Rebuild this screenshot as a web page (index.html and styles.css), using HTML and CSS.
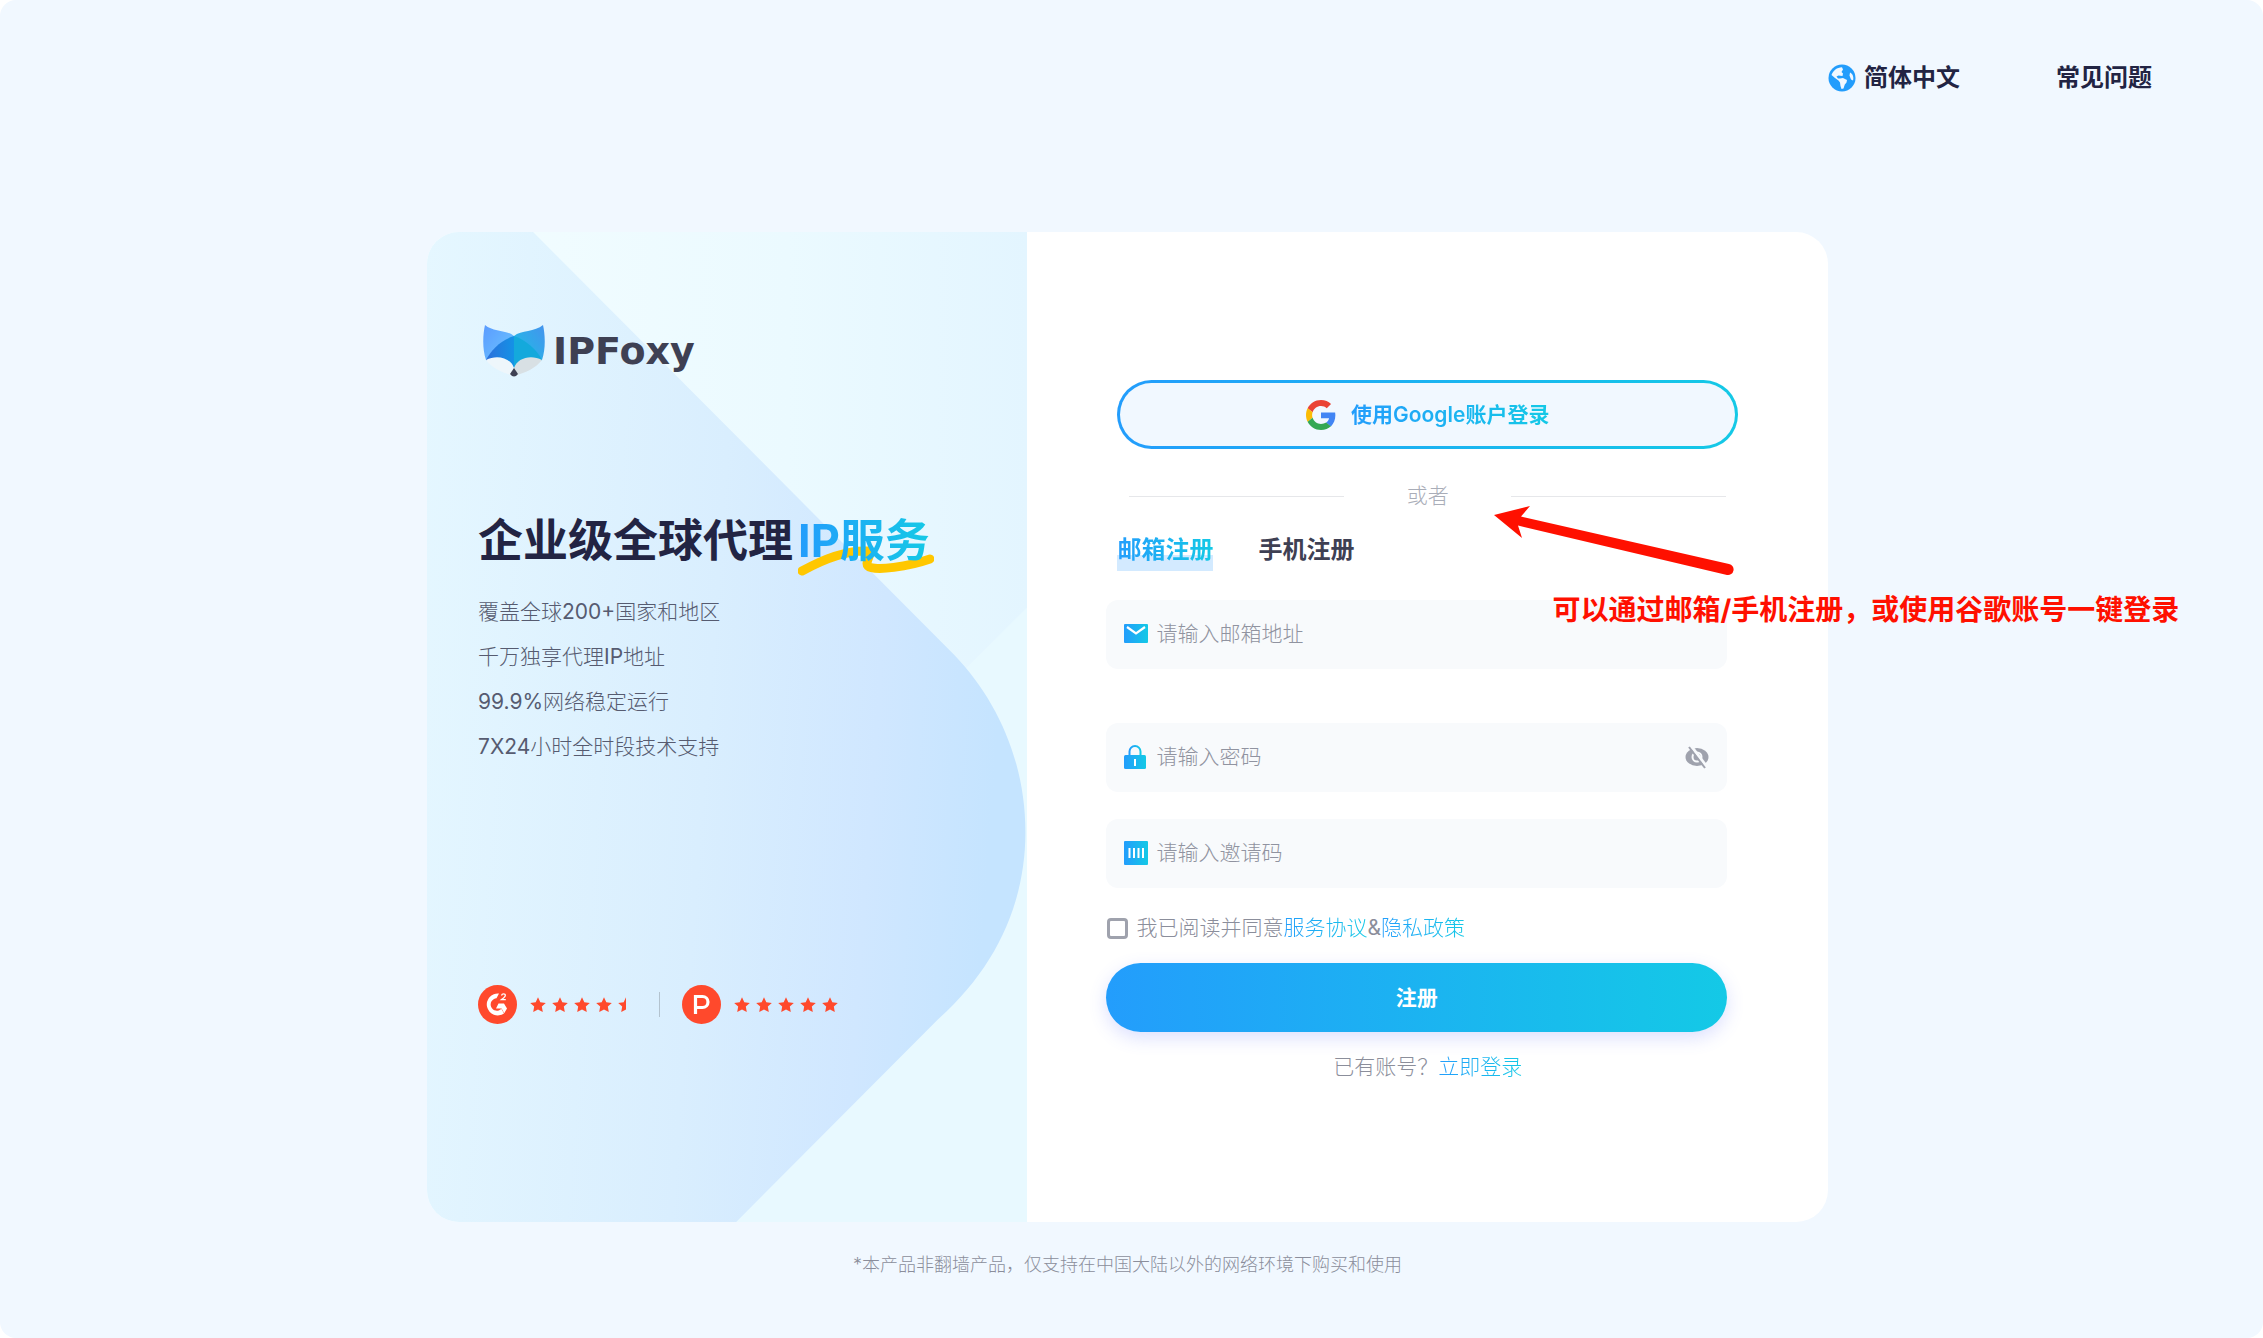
FILE: index.html
```html
<!DOCTYPE html>
<html lang="zh-CN">
<head>
<meta charset="utf-8">
<meta name="viewport" content="width=device-width, initial-scale=1">
<title>IPFoxy 注册</title>
<link rel="stylesheet" href="styles.css">
</head>
<body>
<svg class="defs" width="0" height="0" aria-hidden="true">
  <defs>
    <linearGradient id="brand" x1="0" y1="0" x2="1" y2="0"><stop offset="0" stop-color="#239dfc"/><stop offset="1" stop-color="#14c9e6"/></linearGradient>
    <symbol id="star" viewBox="0 0 16 16"><path d="M8 .3l2.300 4.900 5.500.7-4 3.700 1 5.500L8 12.500 3.200 15.100l1-5.500-4-3.700 5.500-.7z" fill="#ff492c"/></symbol>
  </defs>
</svg>
<div class="page">
  <header class="topbar">
    <nav class="nav">
      <a class="nav-link" href="#">
        <svg class="globe" viewBox="0 0 28 28" aria-hidden="true"><circle cx="14" cy="14" r="13.500" fill="#239dfc"/><path d="M3.500 11C5 6.500 9 3.300 14 3.200L15 5.500 13.500 8 15 9.500 14.500 12 10.500 11.500 8.500 12.500 10 14.500H12L15 14 19 16 18.500 18.500 16.800 20.500 15.500 24.500 13.500 25 12.500 22 12 18.500 10.500 16.500 7 14z" fill="#f1f8ff"/><path d="M22 8.500C24.500 9.500 26 13 25 16.500L23 15.500 21.500 11.500z" fill="#f1f8ff"/></svg>
        简体中文
      </a>
      <a class="nav-link" href="#">常见问题</a>
    </nav>
  </header>

  <main class="card">
    <section class="promo">
      <svg class="promo-bg" viewBox="0 0 600 990" preserveAspectRatio="none" aria-hidden="true">
        <defs>
          <linearGradient id="base" x1="0" y1="0" x2="1" y2="0"><stop offset="0" stop-color="#f3fdff"/><stop offset=".6" stop-color="#ebfaff"/><stop offset="1" stop-color="#e3f5ff"/></linearGradient>
          <linearGradient id="wing" x1="0" y1="0" x2="1" y2=".12"><stop offset="0" stop-color="#e5f7ff"/><stop offset=".52" stop-color="#d9eefe"/><stop offset=".8" stop-color="#d0e7ff"/><stop offset="1" stop-color="#c5e4ff"/></linearGradient>
        </defs>
        <path d="M0 0h600v990H0z" fill="url(#base)"/>
        <path d="M600 375L300 675V990h300z" fill="#e8f9ff"/>
        <path d="M0 0H106L527 423C570 468 598 530 598 600C598 672 568 736 511 787L309 990H0z" fill="url(#wing)"/>
      </svg>
      <div class="logo">
        <svg class="logo-mark" viewBox="0 0 62 54" role="img" aria-label="IPFoxy">
          <defs>
            <linearGradient id="f1" x1="0" y1="0" x2="1" y2="1"><stop offset="0" stop-color="#5b9bff"/><stop offset="1" stop-color="#6cc9ff"/></linearGradient>
            <linearGradient id="f2" x1="0" y1="1" x2="1" y2="0"><stop offset="0" stop-color="#18c4e4"/><stop offset="1" stop-color="#4593ee"/></linearGradient>
            <linearGradient id="f3" x1="0" y1="0" x2="1" y2="0"><stop offset="0" stop-color="#2c6fdb"/><stop offset="1" stop-color="#1492e6"/></linearGradient>
          </defs>
          <path d="M2 1C10 8 24 6 31 12V42L3 36C-1 24 0 10 2 1z" fill="url(#f1)"/>
          <path d="M60 1C52 8 38 6 31 12V42L59 36C63 24 62 10 60 1z" fill="url(#f2)"/>
          <path d="M31 12C18 16 8 26 3 36L31 44z" fill="url(#f3)"/>
          <path d="M31 12C43 16 54 26 59 36L31 44z" fill="#14a9dc"/>
          <path d="M3 36C14 30 28 34 31 44V52C20 49 9 44 3 36z" fill="#eef6fb"/>
          <path d="M59 36C48 30 34 34 31 44V52C42 49 53 44 59 36z" fill="#d8e0e4"/>
          <path d="M31 44L35 50Q31 55 27 50z" fill="#3e4053"/>
        </svg>
        <span class="logo-text">IPFoxy</span>
      </div>
      <h1 class="title"><span>企业级全球代理</span><span class="title-accent"><svg class="swash" viewBox="0 0 136 30" aria-hidden="true"><path d="M4 25C22 15 48 4 70 5C76 6 66 16 70 20C76 26 112 20 132 13" fill="none" stroke="#ffc700" stroke-width="9" stroke-linecap="round" stroke-linejoin="round"/></svg><span class="grad title-word">IP服务</span></span></h1>
      <ul class="features">
        <li>覆盖全球<b>200+</b>国家和地区</li>
        <li>千万独享代理<b>IP</b>地址</li>
        <li><b>99.9%</b>网络稳定运行</li>
        <li><b>7X24</b>小时全时段技术支持</li>
      </ul>
      <div class="ratings">
        <svg class="badge" viewBox="0 0 39 39" role="img" aria-label="G2"><circle cx="19.500" cy="19.500" r="19.500" fill="#ff492c"/><path d="M21 8.500A11 11 0 1 0 26 28.500L23.300 23.800A6.200 6.200 0 1 1 18.500 13.300z" fill="#fff"/><path d="M20.500 18.500H26L29 23.500 26.200 28.300 23.600 23.600H18z" fill="#fff"/><path d="M23.500 10.500Q24 8.800 25.500 8.800Q27.400 8.800 27.300 10.500Q27.200 11.800 23.500 14.600H27.800" fill="none" stroke="#fff" stroke-width="1.300"/></svg>
        <span class="stars">
          <svg class="star"><use href="#star"/></svg><svg class="star"><use href="#star"/></svg><svg class="star"><use href="#star"/></svg><svg class="star"><use href="#star"/></svg><svg class="star star-half" viewBox="0 0 8 16"><use href="#star" width="16" height="16"/></svg>
        </span>
        <span class="rule"></span>
        <svg class="badge" viewBox="0 0 39 39" role="img" aria-label="Product Hunt"><circle cx="19.500" cy="19.500" r="19.500" fill="#ff492c"/><path d="M13.500 29V11.500H20.500a5.500 5.500 0 0 1 0 11H13.500" fill="none" stroke="#fff" stroke-width="3.200"/></svg>
        <span class="stars">
          <svg class="star"><use href="#star"/></svg><svg class="star"><use href="#star"/></svg><svg class="star"><use href="#star"/></svg><svg class="star"><use href="#star"/></svg><svg class="star"><use href="#star"/></svg>
        </span>
      </div>
    </section>

    <section class="signup">
      <div class="social">
        <button class="google" type="button">
          <svg class="google-icon" viewBox="0 0 48 48" aria-hidden="true"><path fill="#EA4335" d="M24 9.500c3.540 0 6.710 1.220 9.210 3.600l6.850-6.850C35.900 2.380 30.470 0 24 0 14.620 0 6.510 5.380 2.560 13.220l7.980 6.190C12.430 13.720 17.740 9.500 24 9.500z"/><path fill="#4285F4" d="M46.980 24.550c0-1.570-.15-3.090-.38-4.550H24v9.020h12.940c-.58 2.960-2.260 5.480-4.780 7.180l7.730 6c4.510-4.180 7.090-10.360 7.090-17.650z"/><path fill="#FBBC05" d="M10.530 28.590c-.48-1.450-.76-2.990-.76-4.590s.27-3.140.76-4.590l-7.980-6.190C.92 16.460 0 20.120 0 24c0 3.880.92 7.540 2.560 10.780l7.970-6.190z"/><path fill="#34A853" d="M24 48c6.480 0 11.930-2.130 15.890-5.810l-7.730-6c-2.150 1.450-4.920 2.300-8.160 2.300-6.260 0-11.570-4.220-13.470-9.910l-7.980 6.190C6.510 42.620 14.620 48 24 48z"/></svg>
          <span class="grad">使用Google账户登录</span>
        </button>
        <div class="or"><span>或者</span></div>
        <div class="tabs" role="tablist">
          <button class="tab tab-active" type="button" role="tab" aria-selected="true"><span class="grad">邮箱注册</span></button>
          <button class="tab" type="button" role="tab" aria-selected="false"><span>手机注册</span></button>
        </div>
      </div>
      <form class="form">
        <div class="field field-email">
          <svg class="icon" viewBox="0 0 24 24" aria-hidden="true"><rect y="2" width="24" height="19" rx="1" fill="url(#brand)"/><path d="M3 5L12 11.500 21 5" fill="none" stroke="#fff" stroke-width="2.200"/></svg>
          <input class="input" type="email" aria-label="邮箱地址" placeholder="请输入邮箱地址">
        </div>
        <div class="field">
          <svg class="icon" viewBox="0 0 24 24" aria-hidden="true"><path d="M5.500 11V6.500a5.500 5.500 0 0 1 11 0V11" fill="none" stroke="url(#brand)" stroke-width="2"/><rect y="10" width="22" height="14" rx="1.500" fill="url(#brand)"/><path d="M11 14v7" stroke="#fff" stroke-width="2"/></svg>
          <input class="input" type="password" aria-label="密码" placeholder="请输入密码">
          <button class="eye" type="button" aria-label="显示密码"><svg viewBox="0 0 24 24" aria-hidden="true"><ellipse cx="12" cy="12" rx="11.500" ry="9" fill="#9fa2ad"/><circle cx="12" cy="12" r="4.500" fill="none" stroke="#f8fafc" stroke-width="2"/><path d="M6 1L22 22" stroke="#f8fafc" stroke-width="3"/><path d="M4 2L20 23" stroke="#9fa2ad" stroke-width="2"/></svg></button>
        </div>
        <div class="field">
          <svg class="icon" viewBox="0 0 24 24" aria-hidden="true"><rect width="24" height="24" rx="1" fill="url(#brand)"/><path d="M5.500 7v10M10 7v10M14.500 7v10M19 7v10" stroke="#fff" stroke-width="2"/></svg>
          <input class="input" type="text" aria-label="邀请码" placeholder="请输入邀请码">
        </div>
        <div class="agree">
          <input class="check" type="checkbox" id="agree">
          <label for="agree">我已阅读并同意</label><a class="grad" href="#">服务协议</a><span>&amp;</span><a class="grad" href="#">隐私政策</a>
        </div>
        <button class="submit" type="submit">注册</button>
      </form>
      <p class="login">已有账号？<a class="grad" href="#">立即登录</a></p>
      <div class="note">
        <svg class="arrow" viewBox="0 0 242 70" aria-hidden="true"><path d="M0 9L36 0 27 10.500 235 58A5.500 5.500 0 0 1 233 69L24 19.500 28 32z" fill="#ff1000"/></svg>
        <p class="note-text">可以通过邮箱/手机注册，或使用谷歌账号一键登录</p>
      </div>
    </section>
  </main>

  <footer class="footer">*本产品非翻墙产品，仅支持在中国大陆以外的网络环境下购买和使用</footer>
</div>
</body>
</html>
```

FILE: styles.css
```css
* { box-sizing: border-box; }

body {
  margin: 0;
  background: #fff;
  color: #222443;
  font-family: "Inter", "Noto Sans CJK SC", sans-serif;
  font-size: 21px;
  font-weight: 300;
  line-height: 30px;
}

a { text-decoration: none; }
svg { display: block; }
.defs { position: absolute; }

button {
  border: 0;
  padding: 0;
  background: none;
  font: inherit;
  color: inherit;
  cursor: pointer;
}

.grad {
  background: linear-gradient(90deg, #239dfc, #14c9e6);
  -webkit-background-clip: text;
  background-clip: text;
  color: transparent;
}

.page {
  display: flex;
  flex-direction: column;
  align-items: center;
  min-height: 100vh;
  padding: 0 8px 0 0;
  border-radius: 16px;
  background: #f1f8ff;
}

.topbar {
  width: 100%;
  padding: 60px 103px 0;
  margin-bottom: 136px;
}

.nav {
  display: flex;
  justify-content: flex-end;
  gap: 96px;
}

.nav-link {
  display: flex;
  align-items: center;
  gap: 8px;
  color: #222443;
  font-size: 24px;
  font-weight: 700;
  line-height: 36px;
}

.globe { width: 28px; height: 28px; }

.card {
  display: grid;
  grid-template-columns: minmax(0, 3fr) minmax(0, 4fr);
  width: 62%;
  min-width: 1401px;
  border-radius: 32px;
  background: #fff;
}

.promo {
  position: relative;
  padding: 92px 51px 0;
  border-radius: 32px 0 0 32px;
  overflow: hidden;
}

.promo > * { position: relative; }

.promo > .promo-bg {
  position: absolute;
  inset: 0;
  width: 100%;
  height: 100%;
}

.logo {
  display: flex;
  align-items: center;
  gap: 8px;
  padding-left: 5px;
}

.logo-mark { width: 62px; height: 54px; }

.logo-text {
  color: #3e4053;
  font-family: "DejaVu Sans", sans-serif;
  font-size: 38px;
  font-weight: 700;
  line-height: 54px;
}

.title {
  display: flex;
  gap: 5px;
  margin: 130px 0 0;
  font-size: 45px;
  font-weight: 700;
  line-height: 66px;
  white-space: nowrap;
}

.title-accent { position: relative; }
.title-word { position: relative; display: block; }

.swash {
  position: absolute;
  left: 0;
  bottom: -2px;
  width: 136px;
  height: 30px;
}

.features {
  margin: 15px 0 0;
  padding: 0;
  list-style: none;
  color: #565b70;
  line-height: 45px;
}

.features b { font-weight: 400; }

.ratings {
  display: flex;
  align-items: center;
  margin-top: 216px;
}

.badge { width: 39px; height: 39px; }

.stars {
  display: flex;
  gap: 6px;
  margin-left: 13px;
}

.star { width: 16px; height: 16px; }
.star-half { width: 8px; }

.rule {
  width: 1px;
  height: 25px;
  margin: 0 22px 0 33px;
  background: #b3c3cf;
}

.signup {
  position: relative;
  padding: 148px 101px 140px 79px;
}

.social { margin: 0 -11px 0 11px; }

.google {
  display: flex;
  align-items: center;
  justify-content: center;
  gap: 15px;
  width: 100%;
  height: 69px;
  border: 3px solid transparent;
  border-radius: 36px;
  background: linear-gradient(#f1f8ff, #f1f8ff) padding-box, linear-gradient(90deg, #239dfc, #14c9e6) border-box;
  font-weight: 600;
}

.google-icon { width: 30px; height: 30px; }

.or {
  display: flex;
  align-items: center;
  justify-content: space-between;
  margin: 32px 12px 0;
  color: #a9adb8;
}

.or::before,
.or::after {
  content: "";
  width: 36%;
  height: 1px;
  background: #e6e7ea;
}

.tabs {
  display: flex;
  gap: 45px;
  margin-top: 24px;
}

.tab {
  display: flex;
  align-items: flex-start;
  height: 36px;
  color: #3e4053;
  font-size: 24px;
  font-weight: 700;
  line-height: 30px;
}

.tab-active { background: linear-gradient(#d3eaff, #d3eaff) bottom / 100% 16px no-repeat; }

.form { margin-top: 29px; }

.field {
  display: flex;
  align-items: center;
  gap: 8px;
  height: 69px;
  margin-bottom: 27px;
  padding: 0 18px 2px;
  border-radius: 12px;
  background: #f8fafc;
}

.field-email { margin-bottom: 54px; }
.icon { width: 24px; height: 24px; }

.input {
  flex: 1;
  min-width: 0;
  height: 45px;
  border: 0;
  padding: 0;
  background: none;
  color: #3e4053;
  font: inherit;
  outline: none;
}

.input::placeholder { color: #9093a0; opacity: 1; }
.eye svg { width: 24px; height: 24px; }

.agree {
  display: flex;
  align-items: center;
  height: 30px;
  margin-top: -2px;
  color: #8b8e9b;
}

.check {
  appearance: none;
  width: 21px;
  height: 21px;
  margin: 0 8px 0 1px;
  border: 3px solid #9fa2ad;
  border-radius: 4px;
}

.agree span { font-weight: 400; }

.submit {
  display: block;
  width: 100%;
  height: 69px;
  margin-top: 20px;
  border-radius: 36px;
  background: linear-gradient(90deg, #239dfc, #14c9e6);
  box-shadow: 0 6px 18px rgba(80, 100, 250, 0.2);
  color: #fff;
  font-weight: 700;
}

.login {
  display: flex;
  justify-content: center;
  margin: 20px -11px 0 11px;
  color: #8b8e9b;
}

/* Callout drawn over the form, pointing at the sign-up options */
.note {
  position: absolute;
  top: 274px;
  left: 467px;
}

.arrow { width: 242px; height: 70px; }

.note-text {
  margin: 14px 0 0 58px;
  color: #ff1000;
  font-size: 28px;
  font-weight: 700;
  line-height: 40px;
  white-space: nowrap;
}

.footer {
  margin-top: 28px;
  padding-bottom: 58px;
  color: #8b8e9b;
  font-size: 18px;
}
```
